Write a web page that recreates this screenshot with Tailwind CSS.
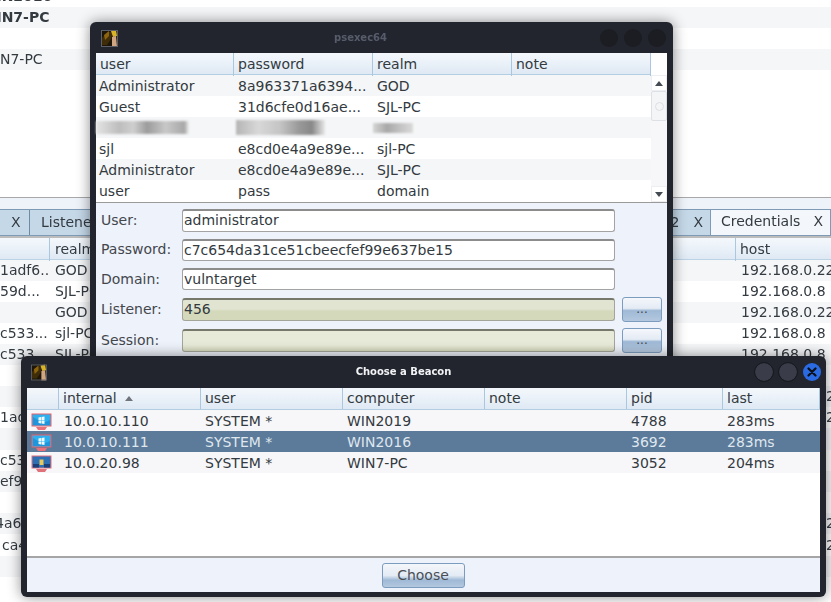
<!doctype html>
<html lang="en">
  <head>
    <meta charset="UTF-8" />
    <title>psexec64</title>
    <script src="https://cdn.jsdelivr.net/npm/@tailwindcss/browser@4"></script>
  </head>
  <body class="m-0 w-[831px] h-[602px] overflow-hidden bg-white relative blur-[0.4px] font-['DejaVu_Sans',sans-serif] text-[14px] leading-[21px] text-[#333a40]">
    <!-- main window behind the dialogs -->
    <div class="-mt-[14px] w-[831px]">
      <div class="h-[21px] font-bold"><div class="-ml-[19px]">WIN2016</div></div>
      <div class="h-[21px] font-bold bg-[#f5f6f8]"><div class="-ml-[19px]">WIN7-PC</div></div>
      <div class="h-[21px]"></div>
      <div class="h-[21px] bg-[#f5f6f8]"><div class="-ml-[18px]">WIN7-PC</div></div>
      <div class="h-[127px] border-b border-[#a8a8a8] box-content"></div>
      <div class="h-[11px] bg-[#eef2f9]"></div>
      <div class="flex h-[27px] bg-[#c5d8e8] border-y border-[#7f9ab5]">
        <div class="w-[30px] border-r border-[#6f8aa5] pl-[11px] leading-[24px]">X</div>
        <div class="w-[200px] pl-[11px] leading-[24px] border-r border-[#6f8aa5]">Listeners</div>
        <div class="flex-1 flex justify-end pr-[7px] gap-[14px] leading-[24px]"><span>2</span><span>X</span></div>
        <div class="w-[121px] bg-[#f3f6fb] border-x border-[#7f9ab5] flex justify-between pl-[10px] pr-[7px] leading-[22px]"><span>Credentials</span><span>X</span></div>
      </div>
      <div class="h-[2px] bg-[#bcbcbc]"></div>
      <div class="grid grid-cols-[50px_686px_95px] h-[22px] leading-[23px] bg-[linear-gradient(#f4f8fc,#dfe9f4)] border-b border-[#bcd3e6]">
        <div class="border-r border-[#a9c8e0]"></div>
        <div class="pl-[5px] border-r border-[#a9c8e0]">realm</div>
        <div class="pl-[4px]">host</div>
      </div>
      <div class="grid grid-cols-[50px_686px_95px] h-[21px] bg-[#f5f6f8]"><div class="text-right pr-[3px] overflow-hidden whitespace-nowrap">1adf6...</div><div class="pl-[5px]">GOD</div><div class="pl-[5px] whitespace-nowrap">192.168.0.22</div></div>
      <div class="grid grid-cols-[50px_686px_95px] h-[21px]"><div class="text-right pr-[15px]">59d...</div><div class="pl-[5px]">SJL-PC</div><div class="pl-[5px]">192.168.0.8</div></div>
      <div class="grid grid-cols-[50px_686px_95px] h-[21px] bg-[#f5f6f8]"><div></div><div class="pl-[5px]">GOD</div><div class="pl-[5px] whitespace-nowrap">192.168.0.22</div></div>
      <div class="grid grid-cols-[50px_686px_95px] h-[21px]"><div class="text-right pr-[7px]">c533...</div><div class="pl-[5px]">sjl-PC</div><div class="pl-[5px]">192.168.0.8</div></div>
      <div class="grid grid-cols-[50px_686px_95px] h-[21px] bg-[#f5f6f8]"><div class="text-right pr-[7px]">c533...</div><div class="pl-[5px]">SJL-PC</div><div class="pl-[5px]">192.168.0.8</div></div>
      <div class="h-[21px]"></div>
      <div class="grid grid-cols-[50px_686px_95px] h-[21px] bg-[#f5f6f8]"><div></div><div></div><div class="pl-[90px]">2</div></div>
      <div class="grid grid-cols-[50px_686px_95px] h-[21px]"><div class="text-right pr-[3px] overflow-hidden whitespace-nowrap">1adf6...</div><div></div><div class="pl-[90px]">2</div></div>
      <div class="h-[22px] bg-[#f5f6f8]"></div>
      <div class="grid grid-cols-[50px_686px_95px] h-[21px]"><div class="text-right pr-[7px]">c533...</div></div>
      <div class="grid grid-cols-[50px_686px_95px] h-[21px] bg-[#f5f6f8]"><div class="text-right pr-[3px]">ef99e...</div></div>
      <div class="h-[21px]"></div>
      <div class="grid grid-cols-[50px_686px_95px] h-[21px] bg-[#f5f6f8]"><div class="-ml-[5px]">4a6b1...</div><div></div><div class="pl-[90px]">2</div></div>
      <div class="grid grid-cols-[50px_686px_95px] h-[22px] leading-[23px]"><div class="pl-[2px]">ca4f7...</div><div></div><div class="pl-[90px]">2</div></div>
      <div class="h-[21px] bg-[#f5f6f8]"></div>
    </div>

    <!-- psexec64 dialog -->
    <div class="absolute left-[90px] top-[22px] w-[583px] h-[345px] bg-[#22252e] rounded-t-[6px] shadow-[0_0_14px_rgba(0,0,0,0.45)] px-[6px] flex flex-col">
      <div class="h-[31px] shrink-0 flex items-center relative">
        <svg class="ml-[5px] mt-[1px]" width="17" height="17" viewBox="0 0 17 17"><rect width="17" height="17" fill="#1d1608"/><path d="M1 8 L7 2 L12 2 L10 9 L6 15 L1 15Z" fill="#3f2c08"/><path d="M3 5 L8 1 L8 6 L4 10Z" fill="#8c640f"/><path d="M10 1 L15 0 L16 6 L12 7Z" fill="#d8b42a"/><path d="M11 7 L15 6 L16 17 L11 17Z" fill="#cfa582"/><rect x="0.5" y="0.5" width="16" height="16" fill="none" stroke="#5a5f68"/></svg>
        <div class="absolute left-0 right-[42px] top-[6px] text-center text-[10px] font-bold text-[#575c6b] leading-[19px]">psexec64</div>
        <div class="ml-auto flex gap-[6px] mr-[1px]">
          <span class="w-[18px] h-[18px] rounded-full bg-[#1b1d22]"></span>
          <span class="w-[18px] h-[18px] rounded-full bg-[#1b1d22]"></span>
          <span class="w-[18px] h-[18px] rounded-full bg-[#1b1d22]"></span>
        </div>
      </div>
      <div class="h-[149px] shrink-0 bg-white border-b border-[#9a9a9a] box-content flex">
        <div class="w-[555px] leading-[23px]">
          <div class="grid grid-cols-[138px_139px_139px_139px] h-[22px] bg-[linear-gradient(#f4f8fc,#dfe9f4)] border-b border-[#b3cde3]">
            <div class="pl-[4px] border-r border-[#a9c8e0]">user</div>
            <div class="pl-[4px] border-r border-[#a9c8e0]">password</div>
            <div class="pl-[4px] border-r border-[#a9c8e0]">realm</div>
            <div class="pl-[4px] border-r border-[#a9c8e0]">note</div>
          </div>
          <div class="grid grid-cols-[138px_139px_139px_139px] h-[21px] bg-[#f5f6f8]"><div class="pl-[3px]">Administrator</div><div class="pl-[4px]">8a963371a6394...</div><div class="pl-[4px]">GOD</div></div>
          <div class="grid grid-cols-[138px_139px_139px_139px] h-[21px]"><div class="pl-[3px]">Guest</div><div class="pl-[4px]">31d6cfe0d16ae...</div><div class="pl-[4px]">SJL-PC</div></div>
          <div class="grid grid-cols-[138px_139px_139px_139px] h-[21px] bg-[#f5f6f8] items-center">
            <div class="h-[13px] w-[93px] blur-[1px] bg-[linear-gradient(90deg,#e4e4e4,#bdbdbd_25%,#cfcfcf_40%,#9c9c9c_55%,#c8c8c8_75%,#a8a8a8_95%,#f0f0f0)]"></div>
            <div class="h-[15px] w-[89px] ml-[2px] blur-[1px] bg-[linear-gradient(90deg,#b5b5b5,#d8d8d8_25%,#c4c4c4_50%,#9a9a9a_70%,#888_85%,#e8e8e8)]"></div>
            <div class="h-[10px] w-[40px] blur-[1px] bg-[linear-gradient(90deg,#d5d5d5,#a8a8a8_35%,#c4c4c4_70%,#dadada)]"></div>
          </div>
          <div class="grid grid-cols-[138px_139px_139px_139px] h-[21px]"><div class="pl-[3px]">sjl</div><div class="pl-[4px]">e8cd0e4a9e89e...</div><div class="pl-[4px]">sjl-PC</div></div>
          <div class="grid grid-cols-[138px_139px_139px_139px] h-[21px] bg-[#f5f6f8]"><div class="pl-[3px]">Administrator</div><div class="pl-[4px]">e8cd0e4a9e89e...</div><div class="pl-[4px]">SJL-PC</div></div>
          <div class="grid grid-cols-[138px_139px_139px_139px] h-[21px]"><div class="pl-[3px]">user</div><div class="pl-[4px]">pass</div><div class="pl-[4px]">domain</div></div>
        </div>
        <div class="w-[16px] flex flex-col pt-[22px] bg-white">
          <div class="flex-1 flex flex-col bg-[#f7f7f9]">
            <div class="h-[16px] flex items-center justify-center bg-white border border-[#eceef2]"><svg width="8" height="5" viewBox="0 0 8 5"><path d="M4 0L8 5H0Z" fill="#444a52"/></svg></div>
            <div class="h-[30px] bg-[#f4f5f7] border border-[#dde0e5] rounded-[2px] flex items-center justify-center"><span class="w-[9px] h-[9px] rounded-full border border-[#dcdfe4]"></span></div>
            <div class="flex-1"></div>
            <div class="h-[16px] flex items-center justify-center bg-white border border-[#eceef2]"><svg width="8" height="5" viewBox="0 0 8 5"><path d="M4 5L8 0H0Z" fill="#444a52"/></svg></div>
          </div>
        </div>
      </div>
      <div class="flex-1 bg-[#eef2fa] px-[5px] pt-[3px] text-[#43474d]">
        <div class="flex items-center h-[29px]">
          <div class="w-[81px]">User:</div>
          <div class="w-[433px] h-[23px] bg-white border border-[#a3a3a3] border-t-[#8c8c8c] border-t-2 rounded-[3px] pl-[1px] leading-[19px] text-[#333a40]">administrator</div>
        </div>
        <div class="flex items-center h-[29px]">
          <div class="w-[81px]">Password:</div>
          <div class="w-[433px] h-[22px] bg-white border border-[#a3a3a3] border-t-[#8c8c8c] border-t-2 rounded-[3px] pl-[1px] leading-[18px] text-[#333a40]">c7c654da31ce51cbeecfef99e637be15</div>
        </div>
        <div class="flex items-center h-[30px]">
          <div class="w-[81px]">Domain:</div>
          <div class="w-[433px] h-[22px] bg-white border border-[#a3a3a3] border-t-[#8c8c8c] border-t-2 rounded-[3px] pl-[1px] leading-[18px] text-[#333a40]">vulntarget</div>
        </div>
        <div class="flex items-center h-[31px]">
          <div class="w-[81px]">Listener:</div>
          <div class="w-[433px] h-[23px] bg-[linear-gradient(#e2e4d2_45%,#d5d9bb_55%)] border border-[#a3a59a] border-t-[#77786c] border-t-2 rounded-[3px] pl-[1px] leading-[19px] text-[#333a40]">456</div>
          <div class="ml-[7px] w-[40px] h-[25px] rounded-[3px] border border-[#7b9cbf] bg-[linear-gradient(#f4f7fb,#e4ebf4_45%,#9fb9d6_55%,#b4c8df)] text-center text-[12px] leading-[23px]">...</div>
        </div>
        <div class="flex items-center h-[31px]">
          <div class="w-[81px]">Session:</div>
          <div class="w-[433px] h-[23px] bg-[linear-gradient(#e8ead9_70%,#d5d9bb)] border border-[#a3a59a] border-t-[#77786c] border-t-2 rounded-[3px]"></div>
          <div class="ml-[7px] w-[40px] h-[25px] rounded-[3px] border border-[#7b9cbf] bg-[linear-gradient(#f4f7fb,#e4ebf4_45%,#9fb9d6_55%,#b4c8df)] text-center text-[12px] leading-[23px]">...</div>
        </div>
      </div>
    </div>

    <!-- beacon chooser -->
    <div class="absolute left-[21px] top-[356px] w-[805px] h-[241px] bg-[#22252e] rounded-[6px] shadow-[0_0_14px_rgba(0,0,0,0.45)] pl-[6px] pr-[6px] pb-[5px] flex flex-col">
      <div class="h-[32px] shrink-0 flex items-center relative">
        <svg class="ml-[4px]" width="16" height="17" viewBox="0 0 17 17"><rect width="17" height="17" fill="#1d1608"/><path d="M1 8 L7 2 L12 2 L10 9 L6 15 L1 15Z" fill="#3f2c08"/><path d="M3 5 L8 1 L8 6 L4 10Z" fill="#8c640f"/><path d="M10 1 L15 0 L16 6 L12 7Z" fill="#d8b42a"/><path d="M11 7 L15 6 L16 17 L11 17Z" fill="#cfa582"/><rect x="0.5" y="0.5" width="16" height="16" fill="none" stroke="#5a5f68"/></svg>
        <div class="absolute left-0 right-[40px] top-[6px] text-center text-[10px] font-bold text-[#f2f3f5] leading-[19px]">Choose a Beacon</div>
        <div class="ml-auto flex gap-[6px] -mr-[1px]">
          <span class="w-[18px] h-[18px] rounded-full bg-[#3a3d49] outline outline-[#17191e]"></span>
          <span class="w-[18px] h-[18px] rounded-full bg-[#3a3d49] outline outline-[#17191e]"></span>
          <span class="w-[18px] h-[18px] rounded-full bg-[#2a6be4] flex items-center justify-center"><svg width="10" height="10" viewBox="0 0 10 10"><path d="M1.5 1.5L8.5 8.5M8.5 1.5L1.5 8.5" stroke="#0c1018" stroke-width="2.2" stroke-linecap="round"/></svg></span>
        </div>
      </div>
      <div class="h-[168px] shrink-0 bg-white border-b-2 border-[#a5a5a5] box-content">
        <div class="grid grid-cols-[32px_142px_142px_142px_142px_96px_97px] h-[22px] bg-[linear-gradient(#f4f8fc,#dfe9f4)] border-b border-[#b3cde3]">
          <div class="border-r border-[#a9c8e0]"></div>
          <div class="pl-[4px] border-r border-[#a9c8e0] flex items-center gap-[8px]">internal <svg width="8" height="5" viewBox="0 0 8 5"><path d="M4 0L8 5H0Z" fill="#70757c"/></svg></div>
          <div class="pl-[4px] border-r border-[#a9c8e0]">user</div>
          <div class="pl-[4px] border-r border-[#a9c8e0]">computer</div>
          <div class="pl-[4px] border-r border-[#a9c8e0]">note</div>
          <div class="pl-[4px] border-r border-[#a9c8e0]">pid</div>
          <div class="pl-[4px] border-r border-[#a9c8e0]">last</div>
        </div>
        <div class="grid grid-cols-[32px_142px_142px_142px_142px_96px_97px] h-[21px] pt-[1px] bg-[#f7f7fa] items-center">
          <svg class="ml-[4px]" width="21" height="18" viewBox="0 0 21 18"><rect x="1" y="1" width="19" height="12" fill="#2fb0ee" stroke="#e8606a"/><path d="M2 4L12 10L19 7V12H2Z" fill="#1f96dc"/><path d="M7.5 4.5L10 4V7H7.5ZM10.5 4L13.5 3.5V7H10.5ZM7.5 7.5H10V10.5L7.5 10ZM10.5 7.5H13.5V11L10.5 10.5Z" fill="#f0f9fd"/><path d="M5 14H16L14 17H7Z" fill="#ea7079"/></svg>
          <div class="pl-[5px]">10.0.10.110</div><div class="pl-[4px]">SYSTEM *</div><div class="pl-[4px]">WIN2019</div><div></div><div class="pl-[4px]">4788</div><div class="pl-[4px]">283ms</div>
        </div>
        <div class="grid grid-cols-[32px_142px_142px_142px_142px_96px_97px] h-[21px] pt-[1px] bg-[#5c7a99] text-[#dfe7ef] items-center">
          <svg class="ml-[4px]" width="21" height="18" viewBox="0 0 21 18"><rect x="1" y="1" width="19" height="12" fill="#2fb0ee" stroke="#e8606a"/><path d="M2 4L12 10L19 7V12H2Z" fill="#1f96dc"/><path d="M7.5 4.5L10 4V7H7.5ZM10.5 4L13.5 3.5V7H10.5ZM7.5 7.5H10V10.5L7.5 10ZM10.5 7.5H13.5V11L10.5 10.5Z" fill="#f0f9fd"/><path d="M5 14H16L14 17H7Z" fill="#ea7079"/></svg>
          <div class="pl-[5px]">10.0.10.111</div><div class="pl-[4px]">SYSTEM *</div><div class="pl-[4px]">WIN2016</div><div></div><div class="pl-[4px]">3692</div><div class="pl-[4px]">283ms</div>
        </div>
        <div class="grid grid-cols-[32px_142px_142px_142px_142px_96px_97px] h-[21px] pt-[1px] bg-[#f7f7fa] items-center">
          <svg class="ml-[4px]" width="21" height="18" viewBox="0 0 21 18"><rect x="1" y="1" width="19" height="12" fill="#2c6fb4" stroke="#e0707a"/><path d="M8.5 4.5H12.5V10H8.5Z" fill="#e5c95a"/><path d="M2 9H8V12.5H2ZM13 9H19V12.5H13Z" fill="#1c3f78"/><path d="M5 14H16L14 17H7Z" fill="#e0707a"/></svg>
          <div class="pl-[5px]">10.0.20.98</div><div class="pl-[4px]">SYSTEM *</div><div class="pl-[4px]">WIN7-PC</div><div></div><div class="pl-[4px]">3052</div><div class="pl-[4px]">204ms</div>
        </div>
      </div>
      <div class="flex-1 bg-[#eef2fa] flex justify-center items-center pr-[1px]">
        <div class="w-[83px] h-[25px] rounded-[3px] border border-[#7b9cbf] bg-[linear-gradient(#f4f7fb,#e4ebf4_50%,#9fb9d6_70%,#b4c8df)] text-center leading-[23px] text-[#4a4f56]">Choose</div>
      </div>
    </div>
  </body>
</html>
